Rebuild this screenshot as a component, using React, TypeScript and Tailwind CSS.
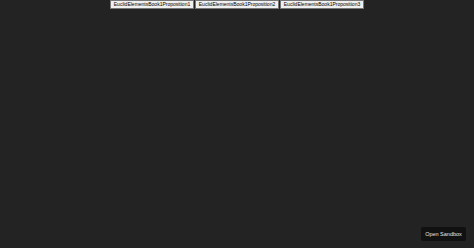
import React from 'react';

const props = ['EuclidElementsBook1Proposition1', 'EuclidElementsBook1Proposition2', 'EuclidElementsBook1Proposition3'];

export default function App() {
  return (
    <div className="relative h-[248px] w-[474px] overflow-hidden bg-[#232323] font-['Liberation_Sans',Arial,sans-serif]">
      <div className="flex justify-center gap-px">
        {props.map((p) => (
          <button
            key={p}
            className="h-[9px] w-[84px] overflow-hidden whitespace-nowrap border border-[#767676] bg-[#efefef] px-0 text-[5px] leading-[7px] text-black"
          >
            {p}
          </button>
        ))}
      </div>
      <button className="absolute bottom-[7px] right-[8px] h-[14px] w-[45px] rounded-[2px] bg-[#111111] text-[5.5px] text-[#e6e6e6]">
        Open Sandbox
      </button>
    </div>
  );
}
